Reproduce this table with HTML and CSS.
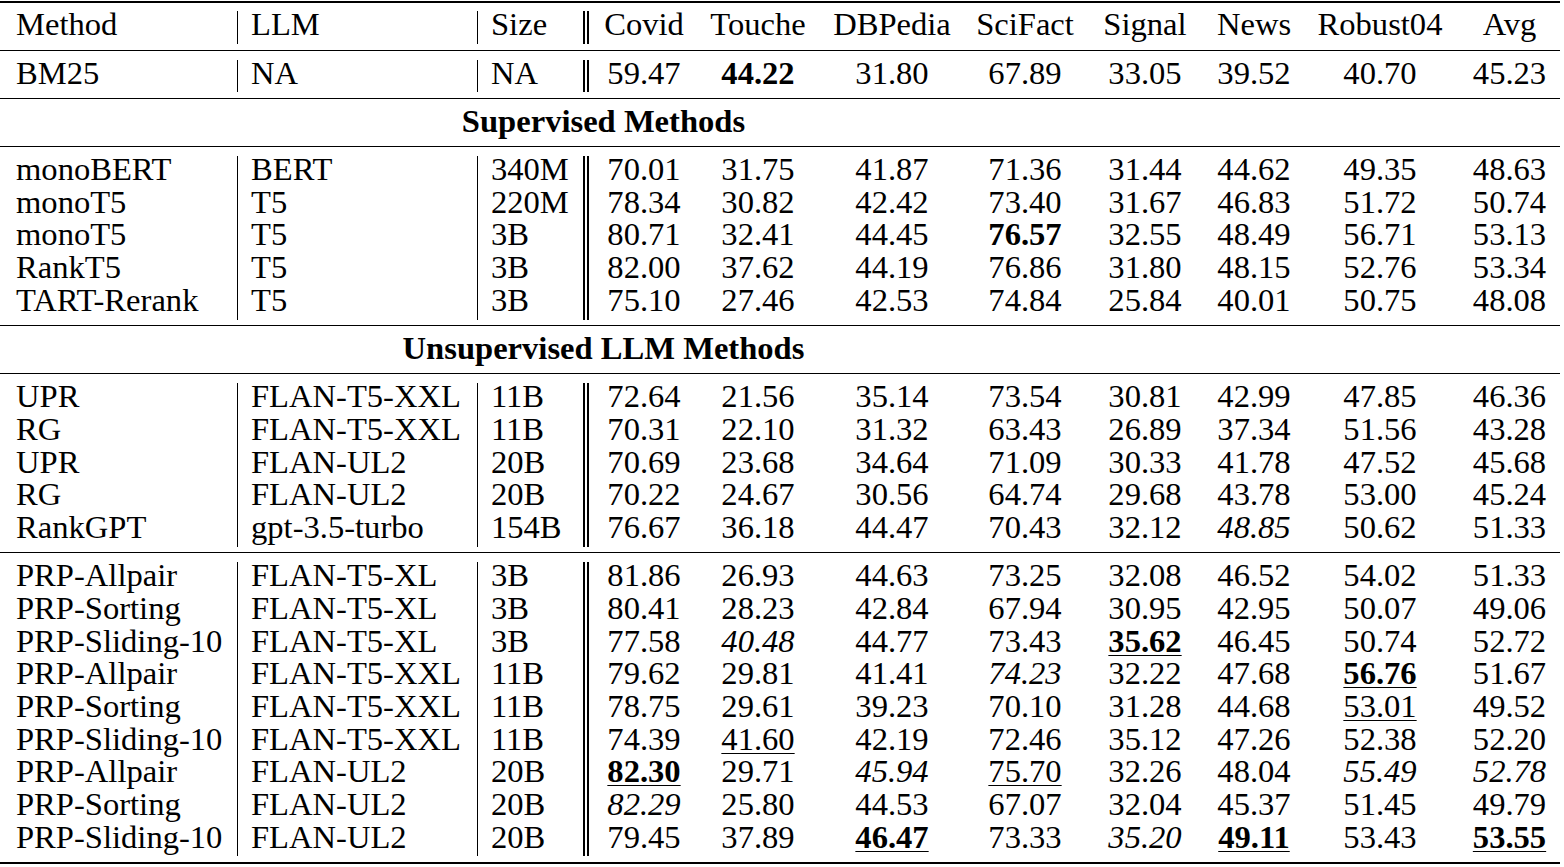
FILE: index.html
```html
<!DOCTYPE html>
<html>
<head>
  <title>Reranking results on BEIR</title>
  <link rel="stylesheet" href="styles.css">
</head>
<body>

<table class="results">
  <colgroup>
    <col class="c-method">
    <col class="c-llm">
    <col class="c-size">
    <col class="c-covid">
    <col class="c-touche">
    <col class="c-dbpedia">
    <col class="c-scifact">
    <col class="c-signal">
    <col class="c-news">
    <col class="c-robust">
    <col class="c-avg">
  </colgroup>

  <!-- header -->
  <tr class="rule top"><td colspan="11"></td></tr>
  <tr class="row head">
    <td>Method</td><td>LLM</td><td>Size</td>
    <td>Covid</td><td>Touche</td><td>DBPedia</td><td>SciFact</td><td>Signal</td><td>News</td><td>Robust04</td><td>Avg</td>
  </tr>
  <tr class="rule"><td colspan="11"></td></tr>
  <tr class="row">
    <td>BM25</td><td>NA</td><td>NA</td>
    <td>59.47</td><td><b>44.22</b></td><td>31.80</td><td>67.89</td><td>33.05</td><td>39.52</td><td>40.70</td><td>45.23</td>
  </tr>
  <tr class="rule"><td colspan="11"></td></tr>

  <!-- supervised -->
  <tr class="group"><th colspan="8">Supervised Methods</th><td colspan="3"></td></tr>
  <tr class="rule"><td colspan="11"></td></tr>
  <tr class="row">
    <td>monoBERT</td><td>BERT</td><td>340M</td>
    <td>70.01</td><td>31.75</td><td>41.87</td><td>71.36</td><td>31.44</td><td>44.62</td><td>49.35</td><td>48.63</td>
  </tr>
  <tr class="row">
    <td>monoT5</td><td>T5</td><td>220M</td>
    <td>78.34</td><td>30.82</td><td>42.42</td><td>73.40</td><td>31.67</td><td>46.83</td><td>51.72</td><td>50.74</td>
  </tr>
  <tr class="row">
    <td>monoT5</td><td>T5</td><td>3B</td>
    <td>80.71</td><td>32.41</td><td>44.45</td><td><b>76.57</b></td><td>32.55</td><td>48.49</td><td>56.71</td><td>53.13</td>
  </tr>
  <tr class="row">
    <td>RankT5</td><td>T5</td><td>3B</td>
    <td>82.00</td><td>37.62</td><td>44.19</td><td>76.86</td><td>31.80</td><td>48.15</td><td>52.76</td><td>53.34</td>
  </tr>
  <tr class="row">
    <td>TART-Rerank</td><td>T5</td><td>3B</td>
    <td>75.10</td><td>27.46</td><td>42.53</td><td>74.84</td><td>25.84</td><td>40.01</td><td>50.75</td><td>48.08</td>
  </tr>
  <tr class="rule"><td colspan="11"></td></tr>

  <!-- unsupervised -->
  <tr class="group"><th colspan="8">Unsupervised LLM Methods</th><td colspan="3"></td></tr>
  <tr class="rule"><td colspan="11"></td></tr>
  <tr class="row">
    <td>UPR</td><td>FLAN-T5-XXL</td><td>11B</td>
    <td>72.64</td><td>21.56</td><td>35.14</td><td>73.54</td><td>30.81</td><td>42.99</td><td>47.85</td><td>46.36</td>
  </tr>
  <tr class="row">
    <td>RG</td><td>FLAN-T5-XXL</td><td>11B</td>
    <td>70.31</td><td>22.10</td><td>31.32</td><td>63.43</td><td>26.89</td><td>37.34</td><td>51.56</td><td>43.28</td>
  </tr>
  <tr class="row">
    <td>UPR</td><td>FLAN-UL2</td><td>20B</td>
    <td>70.69</td><td>23.68</td><td>34.64</td><td>71.09</td><td>30.33</td><td>41.78</td><td>47.52</td><td>45.68</td>
  </tr>
  <tr class="row">
    <td>RG</td><td>FLAN-UL2</td><td>20B</td>
    <td>70.22</td><td>24.67</td><td>30.56</td><td>64.74</td><td>29.68</td><td>43.78</td><td>53.00</td><td>45.24</td>
  </tr>
  <tr class="row">
    <td>RankGPT</td><td>gpt-3.5-turbo</td><td>154B</td>
    <td>76.67</td><td>36.18</td><td>44.47</td><td>70.43</td><td>32.12</td><td><i>48.85</i></td><td>50.62</td><td>51.33</td>
  </tr>
  <tr class="rule"><td colspan="11"></td></tr>

  <!-- PRP -->
  <tr class="row">
    <td>PRP-Allpair</td><td>FLAN-T5-XL</td><td>3B</td>
    <td>81.86</td><td>26.93</td><td>44.63</td><td>73.25</td><td>32.08</td><td>46.52</td><td>54.02</td><td>51.33</td>
  </tr>
  <tr class="row">
    <td>PRP-Sorting</td><td>FLAN-T5-XL</td><td>3B</td>
    <td>80.41</td><td>28.23</td><td>42.84</td><td>67.94</td><td>30.95</td><td>42.95</td><td>50.07</td><td>49.06</td>
  </tr>
  <tr class="row">
    <td>PRP-Sliding-10</td><td>FLAN-T5-XL</td><td>3B</td>
    <td>77.58</td><td><i>40.48</i></td><td>44.77</td><td>73.43</td><td><u><b>35.62</b></u></td><td>46.45</td><td>50.74</td><td>52.72</td>
  </tr>
  <tr class="row">
    <td>PRP-Allpair</td><td>FLAN-T5-XXL</td><td>11B</td>
    <td>79.62</td><td>29.81</td><td>41.41</td><td><i>74.23</i></td><td>32.22</td><td>47.68</td><td><u><b>56.76</b></u></td><td>51.67</td>
  </tr>
  <tr class="row">
    <td>PRP-Sorting</td><td>FLAN-T5-XXL</td><td>11B</td>
    <td>78.75</td><td>29.61</td><td>39.23</td><td>70.10</td><td>31.28</td><td>44.68</td><td><u>53.01</u></td><td>49.52</td>
  </tr>
  <tr class="row">
    <td>PRP-Sliding-10</td><td>FLAN-T5-XXL</td><td>11B</td>
    <td>74.39</td><td><u>41.60</u></td><td>42.19</td><td>72.46</td><td>35.12</td><td>47.26</td><td>52.38</td><td>52.20</td>
  </tr>
  <tr class="row">
    <td>PRP-Allpair</td><td>FLAN-UL2</td><td>20B</td>
    <td><u><b>82.30</b></u></td><td>29.71</td><td><i>45.94</i></td><td><u>75.70</u></td><td>32.26</td><td>48.04</td><td><i>55.49</i></td><td><i>52.78</i></td>
  </tr>
  <tr class="row">
    <td>PRP-Sorting</td><td>FLAN-UL2</td><td>20B</td>
    <td><i>82.29</i></td><td>25.80</td><td>44.53</td><td>67.07</td><td>32.04</td><td>45.37</td><td>51.45</td><td>49.79</td>
  </tr>
  <tr class="row">
    <td>PRP-Sliding-10</td><td>FLAN-UL2</td><td>20B</td>
    <td>79.45</td><td>37.89</td><td><u><b>46.47</b></u></td><td>73.33</td><td><i>35.20</i></td><td><u><b>49.11</b></u></td><td>53.43</td><td><u><b>53.55</b></u></td>
  </tr>
  <tr class="rule bottom"><td colspan="11"></td></tr>
</table>

</body>
</html>
```

FILE: styles.css
```css
/* General */
body {
    margin: 0;
    background: #fff;
    color: #000;
    font-family: "Liberation Serif", "Times New Roman", serif;
    font-size: 32.6px;
}

/* Table */
.results {
    width: 1560px;
    table-layout: fixed;
    border-collapse: separate;
    border-spacing: 0;
}

.c-method { width: 237px; }
.c-llm { width: 240px; }
.c-size { width: 112px; }
.c-covid { width: 110px; }
.c-touche { width: 118px; }
.c-dbpedia { width: 150px; }
.c-scifact { width: 116px; }
.c-signal { width: 124px; }
.c-news { width: 94px; }
.c-robust { width: 158px; }
.c-avg { width: 101px; }

.results td,
.results th {
    padding: 0 0 5.9px;
    line-height: 26.8px;
    vertical-align: top;
    white-space: nowrap;
    text-align: center;
    font-weight: normal;
}

/* data rows: left text columns + vertical rules */
.row td:nth-child(1) {
    text-align: left;
    padding-left: 16px;
}

.row td:nth-child(2),
.row td:nth-child(3) {
    text-align: left;
    padding-left: 13px;
    border-left: 1.5px solid #000;
}

.row td:nth-child(3) {
    border-right: 6px double #000;
}

/* section titles */
.group th {
    font-weight: bold;
}

/* horizontal rules (booktabs style, with space around) */
.rule td {
    padding: 0;
    height: 15.56px;
    background: linear-gradient(#000, #000) 0 5.5px / 100% 1.36px no-repeat;
}

.rule.top td {
    height: 11.4px;
    background-position: 0 0.5px;
    background-size: 100% 2.2px;
}

.rule.bottom td {
    height: 7.7px;
    background-position: 0 5.5px;
    background-size: 100% 2.2px;
}

/* marks */
b { font-weight: bold; }
i { font-style: italic; }

u {
    text-decoration: underline;
    text-decoration-thickness: 1.4px;
    text-underline-offset: 3px;
}
```
